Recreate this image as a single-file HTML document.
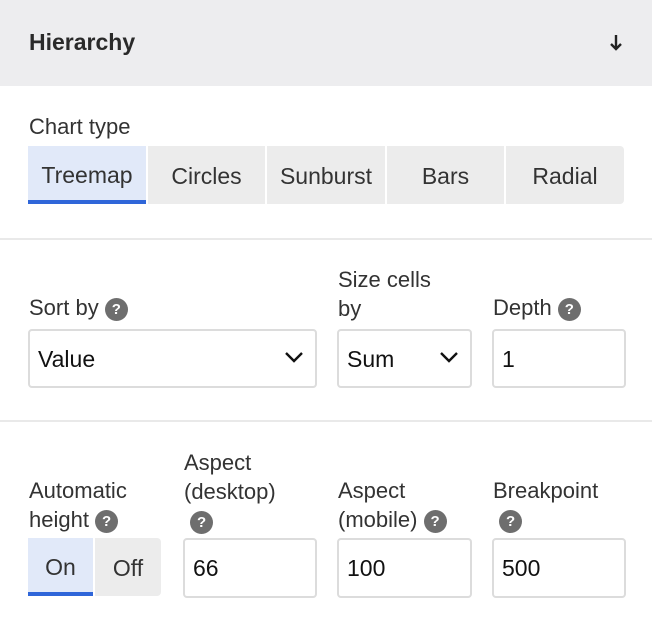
<!DOCTYPE html>
<html><head><style>
*{box-sizing:border-box;margin:0;padding:0}
body{width:652px;height:622px;background:#fff;font-family:"Liberation Sans",sans-serif;color:#333;position:relative;overflow:hidden}
.a{position:absolute}
.hdr{left:0;top:0;width:652px;height:86px;background:#ededef}
.t{font-size:22px;line-height:29px;white-space:nowrap}
.btn{position:absolute;top:146px;height:58px;background:#ececec;font-size:23px;text-align:center;line-height:60px;color:#333}
.sel{background:#e1e9f9;border-bottom:4px solid #2f66d9;line-height:58px}
.box{position:absolute;border:2px solid #dcdcdc;border-radius:4px;background:#fff;font-size:23px;color:#111;padding-left:8px;line-height:56px}
.q{display:inline-block;width:23px;height:23px;border-radius:50%;background:#6e6e6e;color:#fff;font-size:15px;font-weight:bold;text-align:center;line-height:23px;vertical-align:1px}
.hr{left:0;width:652px;height:2px;background:#e9e9e9}
</style></head><body>
<div class="a hdr"></div>
<div class="a t" style="left:29px;top:28px;font-weight:bold;font-size:23px;color:#2a2a2a">Hierarchy</div>
<svg class="a" style="left:608px;top:33px" width="16" height="20" viewBox="0 0 16 20"><path d="M8 2V16M3 11L8 16L13 11" stroke="#222" stroke-width="2.4" fill="none"/></svg>
<div class="a t" style="left:29px;top:112px">Chart type</div>
<div class="btn sel" style="left:28px;width:118px">Treemap</div>
<div class="btn" style="left:148px;width:117px">Circles</div>
<div class="btn" style="left:267px;width:118px">Sunburst</div>
<div class="btn" style="left:387px;width:117px">Bars</div>
<div class="btn" style="left:506px;width:118px;border-radius:0 4px 4px 0">Radial</div>
<div class="a hr" style="top:238px"></div>
<div class="a t" style="left:29px;top:293px">Sort by <span class="q">?</span></div>
<div class="a t" style="left:338px;top:265px">Size cells<br>by</div>
<div class="a t" style="left:493px;top:293px">Depth <span class="q">?</span></div>
<div class="box" style="left:28px;top:329px;width:289px;height:59px">Value</div>
<svg class="a" style="left:284px;top:350px" width="20" height="14" viewBox="0 0 20 14"><path d="M2 3L10 11L18 3" stroke="#111" stroke-width="2.4" fill="none"/></svg>
<div class="box" style="left:337px;top:329px;width:135px;height:59px">Sum</div>
<svg class="a" style="left:439px;top:350px" width="20" height="14" viewBox="0 0 20 14"><path d="M2 3L10 11L18 3" stroke="#111" stroke-width="2.4" fill="none"/></svg>
<div class="box" style="left:492px;top:329px;width:134px;height:59px">1</div>
<div class="a hr" style="top:420px"></div>
<div class="a t" style="left:29px;top:476px">Automatic<br>height <span class="q">?</span></div>
<div class="a t" style="left:184px;top:448px">Aspect<br>(desktop)<br>&nbsp;<span class="q">?</span></div>
<div class="a t" style="left:338px;top:476px">Aspect<br>(mobile) <span class="q">?</span></div>
<div class="a t" style="left:493px;top:476px">Breakpoint<br>&nbsp;<span class="q">?</span></div>
<div class="btn sel" style="left:28px;top:538px;width:65px;height:58px">On</div>
<div class="btn" style="left:95px;top:538px;width:66px;height:58px;border-radius:0 4px 4px 0">Off</div>
<div class="box" style="left:183px;top:538px;width:134px;height:60px">66</div>
<div class="box" style="left:337px;top:538px;width:135px;height:60px">100</div>
<div class="box" style="left:492px;top:538px;width:134px;height:60px">500</div>
</body></html>
